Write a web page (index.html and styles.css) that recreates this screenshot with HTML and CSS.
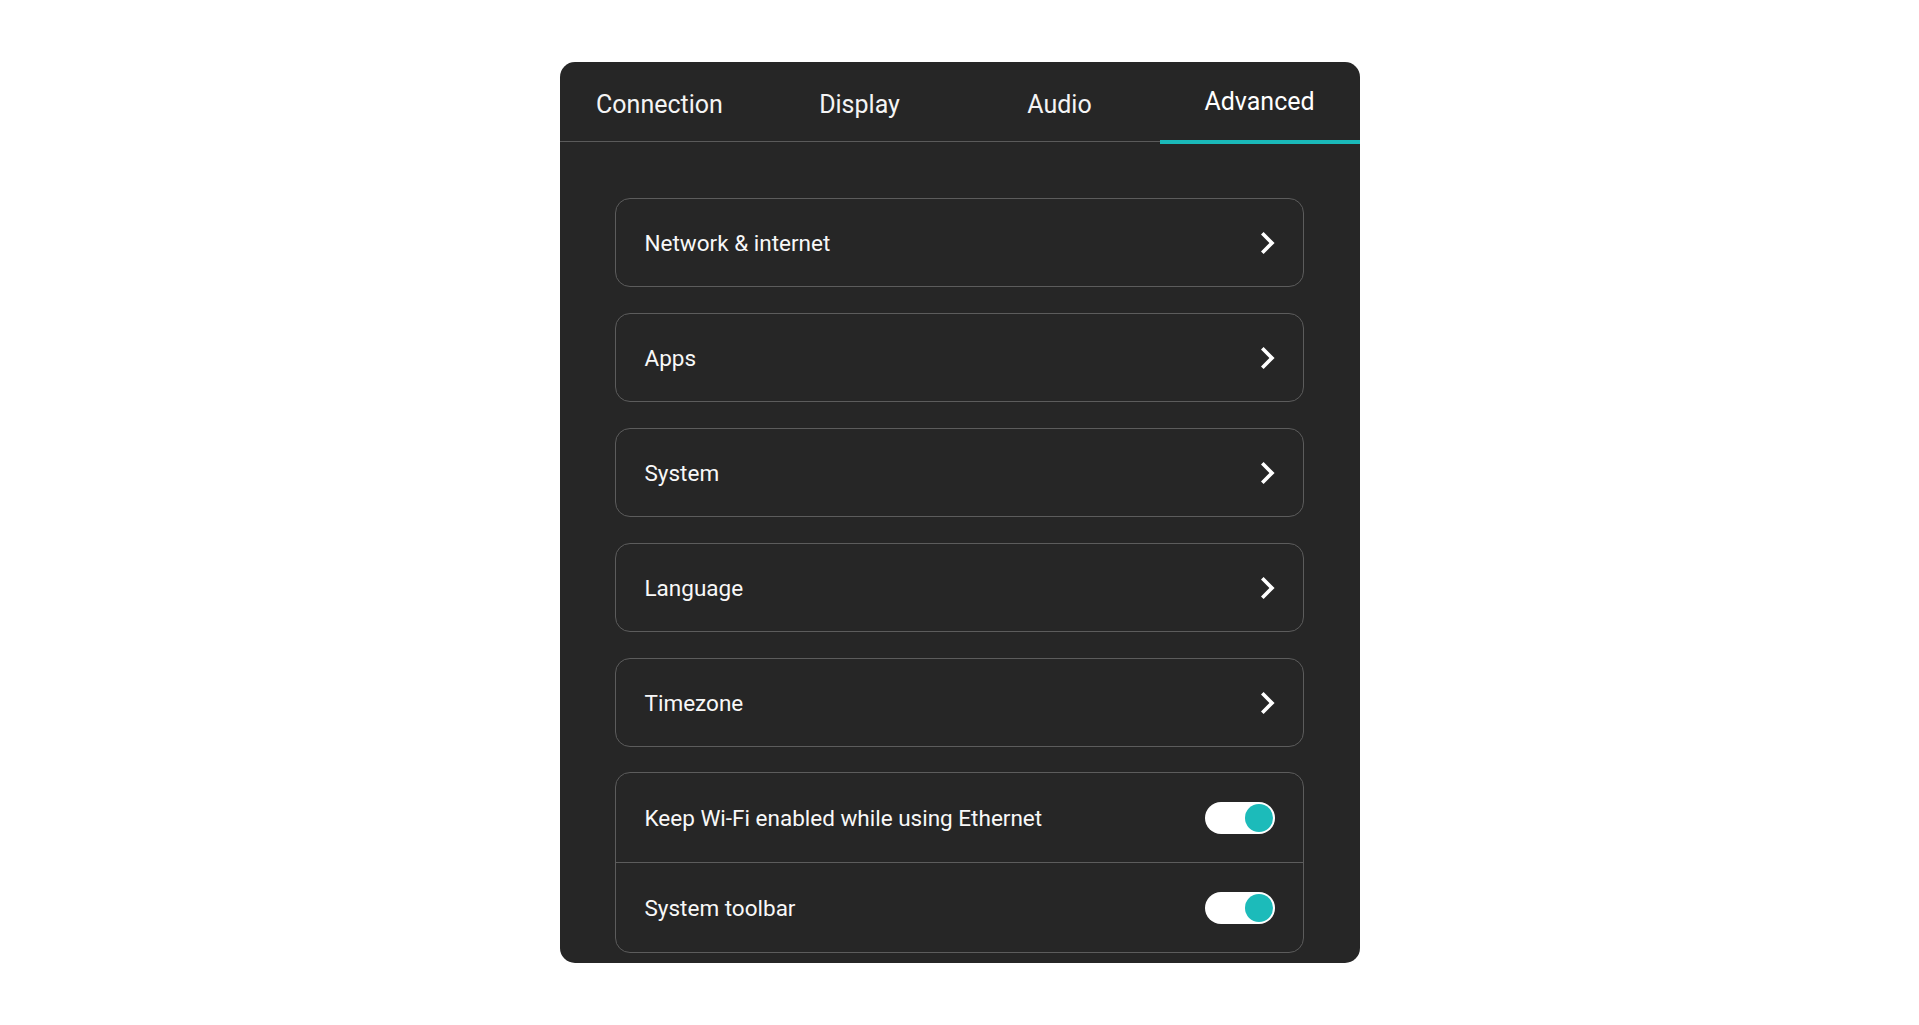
FILE: index.html
```html
<!DOCTYPE html>
<html lang="en">
<head>
<meta charset="utf-8">
<title>Settings</title>
<link rel="stylesheet" href="styles.css">
</head>
<body>
<div class="panel">
  <nav class="tabs">
    <div class="tab">Connection</div>
    <div class="tab">Display</div>
    <div class="tab">Audio</div>
    <div class="tab active">Advanced</div>
  </nav>
  <div class="content">
    <div class="card">
      <span class="label">Network &amp; internet</span>
      <svg class="chev" viewBox="8.59 6 7.41 12" width="13.6" height="22"><path d="M10 6L8.59 7.41 13.17 12l-4.58 4.59L10 18l6-6z" fill="#fff"/></svg>
    </div>
    <div class="card">
      <span class="label">Apps</span>
      <svg class="chev" viewBox="8.59 6 7.41 12" width="13.6" height="22"><path d="M10 6L8.59 7.41 13.17 12l-4.58 4.59L10 18l6-6z" fill="#fff"/></svg>
    </div>
    <div class="card">
      <span class="label">System</span>
      <svg class="chev" viewBox="8.59 6 7.41 12" width="13.6" height="22"><path d="M10 6L8.59 7.41 13.17 12l-4.58 4.59L10 18l6-6z" fill="#fff"/></svg>
    </div>
    <div class="card">
      <span class="label">Language</span>
      <svg class="chev" viewBox="8.59 6 7.41 12" width="13.6" height="22"><path d="M10 6L8.59 7.41 13.17 12l-4.58 4.59L10 18l6-6z" fill="#fff"/></svg>
    </div>
    <div class="card">
      <span class="label">Timezone</span>
      <svg class="chev" viewBox="8.59 6 7.41 12" width="13.6" height="22"><path d="M10 6L8.59 7.41 13.17 12l-4.58 4.59L10 18l6-6z" fill="#fff"/></svg>
    </div>
    <div class="group">
      <div class="row">
        <span class="label">Keep Wi-Fi enabled while using Ethernet</span>
        <div class="toggle"><div class="knob"></div></div>
      </div>
      <div class="row">
        <span class="label">System toolbar</span>
        <div class="toggle"><div class="knob"></div></div>
      </div>
    </div>
  </div>
</div>
</body>
</html>
```

FILE: styles.css
```css
html, body {
  margin: 0;
  padding: 0;
  background: #ffffff;
}
body {
  font-family: Roboto, "Liberation Sans", sans-serif;
  color: #ffffff;
}
.panel {
  width: 800px;
  height: 901px;
  margin: 62px auto 0;
  background: #262626;
  border-radius: 15px;
  overflow: hidden;
  box-sizing: border-box;
}
.tabs {
  display: flex;
  height: 80px;
  border-bottom: 1px solid #5a5a5a;
  box-sizing: border-box;
}
.tab {
  flex: 1;
  text-align: center;
  font-size: 25px;
  line-height: 30px;
  padding-top: 28px;
  position: relative;
  color: #f4f4f4;
}
.tab.active {
  padding-top: 25px;
  color: #ffffff;
}
.tab.active::after {
  content: "";
  position: absolute;
  left: 0;
  right: 0;
  bottom: -3px;
  height: 4px;
  background: #1ab9b9;
}
.content {
  padding: 56px 56px 0 55px;
  display: flex;
  flex-direction: column;
  gap: 26px;
}
.card {
  height: 89px;
  box-sizing: border-box;
  border: 1px solid #5c5c5c;
  border-radius: 15px;
  display: flex;
  align-items: center;
  justify-content: space-between;
  padding: 0 28px 0 29px;
}
.label {
  font-size: 22.5px;
  padding-top: 1px;
  color: #f8f8f8;
}
.chev {
  display: block;
}
.group {
  border: 1px solid #5c5c5c;
  border-radius: 15px;
  display: flex;
  flex-direction: column;
  margin-top: -1px;
}
.row {
  height: 89px;
  box-sizing: border-box;
  display: flex;
  align-items: center;
  justify-content: space-between;
  padding: 0 28px 0 29px;
}
.row + .row {
  border-top: 1px solid #5c5c5c;
  height: 90px;
}
.toggle {
  width: 70px;
  height: 32px;
  border-radius: 16px;
  background: #ffffff;
  display: flex;
  align-items: center;
  justify-content: flex-end;
  padding: 0 2px;
  box-sizing: border-box;
}
.knob {
  width: 28px;
  height: 28px;
  border-radius: 50%;
  background: #1cbbba;
}
```
